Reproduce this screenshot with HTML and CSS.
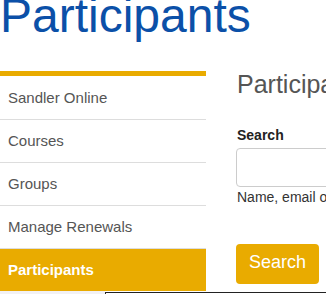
FILE: index.html
```html
<!DOCTYPE html>
<html lang="en">

<head>
    <meta charset="UTF-8">
    <meta name="viewport" content="width=device-width, initial-scale=1.0">
    <title>Participants</title>
    <link rel="stylesheet" href="styles.css">
</head>

<body>
    <h1 class="page-title">Participants</h1>

    <div class="layout">
        <nav class="side-nav">
            <a href="#" class="nav-item">Sandler Online</a>
            <a href="#" class="nav-item">Courses</a>
            <a href="#" class="nav-item">Groups</a>
            <a href="#" class="nav-item">Manage Renewals</a>
            <a href="#" class="nav-item active">Participants</a>
        </nav>

        <main class="content">
            <h2 class="content-title">Participants</h2>
            <form class="search-form">
                <label for="search" class="search-label">Search</label>
                <input type="text" id="search" name="search" class="search-input">
                <div class="help-text">Name, email or company</div>
                <button type="submit" class="search-btn">Search</button>
            </form>
        </main>
    </div>

    <div class="footer">
        <div class="footer-left"></div>
        <div class="footer-right"></div>
    </div>
</body>

</html>
```

FILE: styles.css
```css
body {
    font-family: "Liberation Sans", Arial, sans-serif;
    margin: 0;
    padding: 0;
    background-color: white;
    overflow: hidden;
}

.page-title {
    margin: -8px 0 0 0;
    font-size: 48px;
    line-height: 48px;
    font-weight: normal;
    color: #0b50a8;
}

.layout {
    display: flex;
    margin-top: 31px;
}

.side-nav {
    width: 206px;
    flex: none;
    display: flex;
    flex-direction: column;
    border-top: 5px solid #e9ab00;
}

.nav-item {
    display: block;
    padding: 11px 8px;
    font-size: 15px;
    line-height: 20px;
    color: #555;
    text-decoration: none;
    border-bottom: 1px solid #ddd;
}

.nav-item:first-child {
    padding-top: 12px;
}

.nav-item.active {
    background-color: #e9ab00;
    color: white;
    font-weight: bold;
    border-bottom: none;
}

.content {
    flex: none;
    width: 400px;
    padding-left: 31px;
}

.content-title {
    margin: 0;
    font-size: 25px;
    line-height: 26px;
    font-weight: normal;
    color: #555;
}

.search-form {
    display: flex;
    flex-direction: column;
    align-items: flex-start;
    margin-top: 28px;
}

.search-label {
    font-size: 14px;
    line-height: 20px;
    font-weight: bold;
    color: #222;
}

.search-input {
    box-sizing: border-box;
    margin: 3px 0 0 -1px;
    width: 360px;
    height: 39px;
    border: 1px solid #ccc;
    border-radius: 4px;
    font-size: 14px;
}

.help-text {
    font-size: 14px;
    line-height: 20px;
    color: #333;
}

.search-btn {
    margin: 37px 0 0 -1px;
    padding: 6px 13px 10px;
    font-family: inherit;
    font-size: 18px;
    line-height: 24px;
    background-color: #e9ab00;
    color: white;
    border: none;
    border-radius: 4px;
    cursor: pointer;
}

.footer {
    display: flex;
    height: 3px;
}

.footer-left {
    width: 105px;
    background-color: #f2f1f4;
}

.footer-right {
    flex: 1;
    margin-top: 1px;
    border-top: 1px solid #222;
    border-left: 1px solid #222;
}
```
